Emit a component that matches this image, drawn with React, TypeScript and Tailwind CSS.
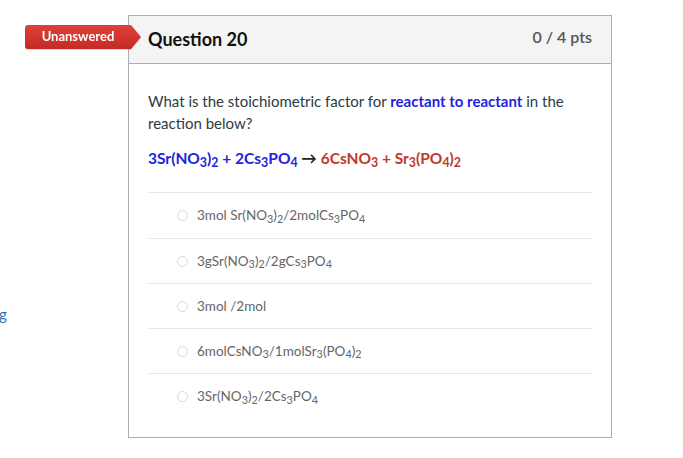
import React from "react";

const Sub = ({ children }: { children: React.ReactNode }) => (
  <sub className="text-[0.8em] relative top-[0.22em] align-baseline leading-none">{children}</sub>
);

const answers: React.ReactNode[] = [
  <>3mol Sr(NO<Sub>3</Sub>)<Sub>2</Sub>/2molCs<Sub>3</Sub>PO<Sub>4</Sub></>,
  <>3gSr(NO<Sub>3</Sub>)<Sub>2</Sub>/2gCs<Sub>3</Sub>PO<Sub>4</Sub></>,
  <>3mol /2mol</>,
  <>6molCsNO<Sub>3</Sub>/1molSr<Sub>3</Sub>(PO<Sub>4</Sub>)<Sub>2</Sub></>,
  <>3Sr(NO<Sub>3</Sub>)<Sub>2</Sub>/2Cs<Sub>3</Sub>PO<Sub>4</Sub></>,
];

export default function App() {
  return (
    <div
      className="relative w-[683px] h-[458px] bg-white overflow-hidden"
      style={{ fontFamily: "Lato, 'Open Sans', sans-serif" }}
    >
      <span className="absolute left-[-1px] top-[303px] text-[15px] text-[#2d6fb8]">g</span>

      <div className="ml-[128px] mt-[15px] w-[484px] h-[423px] border border-[#adadad] bg-white">
        <div className="relative h-[48px] bg-[#f4f4f4] border-b border-[#adadad] flex items-center justify-between pl-[19px] pr-[19px]">
          <span className="text-[18px] font-bold text-[#111]">Question 20</span>
          <span className="text-[16px] font-semibold text-[#555] mt-[-5px]">0 / 4 pts</span>
        </div>

        <div className="px-[19px] pt-[26px]">
          <p className="text-[15px] leading-[22px] text-[#2d3b45]">
            What is the stoichiometric factor for{" "}
            <span className="font-bold text-[#1f1fe0]">reactant to reactant</span> in the reaction below?
          </p>
          <p className="mt-[13px] text-[15.5px] leading-[22px] font-bold">
            <span className="text-[#2222e0]">
              3Sr(NO<Sub>3</Sub>)<Sub>2</Sub> + 2Cs<Sub>3</Sub>PO<Sub>4</Sub>
            </span>
            <span className="text-[#222]"> → </span>
            <span className="text-[#c0392b]">
              6CsNO<Sub>3</Sub> + Sr<Sub>3</Sub>(PO<Sub>4</Sub>)<Sub>2</Sub>
            </span>
          </p>

          <div className="mt-[23px] border-t border-[#e8e8e8]">
            {answers.map((a, i) => (
              <div
                key={i}
                className={`flex items-center ${i === 0 ? "h-[46px]" : "h-[45px]"} pl-[29px] ${i < answers.length - 1 ? "border-b border-[#e8e8e8]" : ""}`}
              >
                <span className="w-[11px] h-[11px] rounded-full border border-[#d8d8d8] bg-white shrink-0" />
                <span className="ml-[9px] text-[13.5px] text-[#666]">{a}</span>
              </div>
            ))}
          </div>
        </div>
      </div>

      <div className="absolute left-[25px] top-[25px] h-[24px] flex items-stretch drop-shadow-[0_1px_0_rgba(0,0,0,0.15)]">
        <div className="w-[106px] rounded-l-[3px] bg-gradient-to-b from-[#e2403a] to-[#c42a25] flex items-center justify-center">
          <span className="text-[13px] font-bold text-white">Unanswered</span>
        </div>
        <svg width="10" height="24" viewBox="0 0 10 24" className="block">
          <defs>
            <linearGradient id="ag" x1="0" y1="0" x2="0" y2="1">
              <stop offset="0" stopColor="#e2403a" />
              <stop offset="1" stopColor="#c42a25" />
            </linearGradient>
          </defs>
          <polygon points="0,0 10,12 0,24" fill="url(#ag)" />
        </svg>
      </div>
    </div>
  );
}
